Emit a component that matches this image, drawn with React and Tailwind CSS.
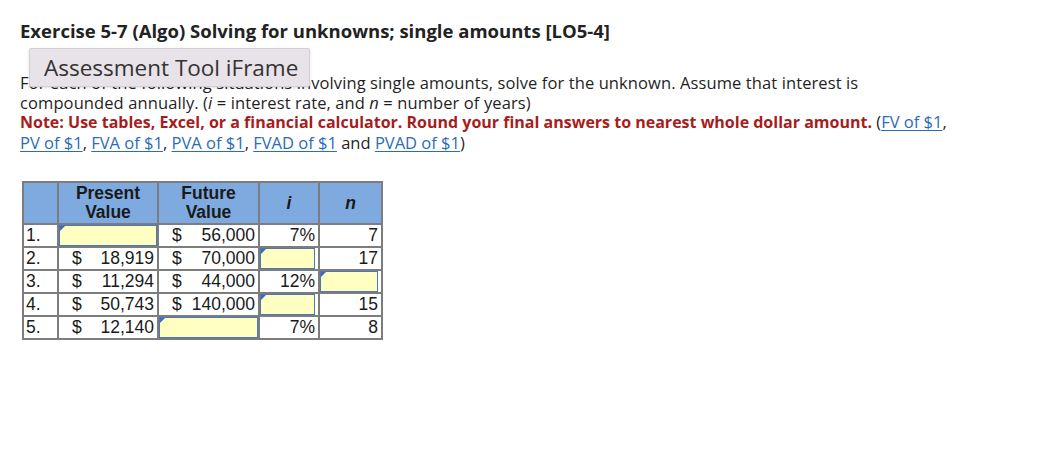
import React from 'react';

// --- Data ---

const rows = [
    { num: '1.', pv: null, fv: '56,000', i: '7%', n: '7' },
    { num: '2.', pv: '18,919', fv: '70,000', i: null, n: '17' },
    { num: '3.', pv: '11,294', fv: '44,000', i: '12%', n: null },
    { num: '4.', pv: '50,743', fv: '140,000', i: null, n: '15' },
    { num: '5.', pv: '12,140', fv: null, i: '7%', n: '8' },
];

// --- Small pieces ---

const Link = ({ children }) => (
    <span className="text-[#2b6cb8] underline underline-offset-2">{children}</span>
);

// yellow answer box with the little blue corner flag
const InputCell = () => (
    <div className="relative h-[21px] bg-[#ffffc2] border border-[#4a78b8]">
        <div className="absolute left-0 top-0 w-0 h-0 border-t-[5px] border-t-[#3a6cc0] border-r-[5px] border-r-transparent" />
    </div>
);

const Money = ({ value }) => (
    <div className="flex justify-between pl-[13px] pr-[3px]">
        <span>$</span>
        <span>{value}</span>
    </div>
);

// --- Main ---

const App = () => {
    const cell = 'border-2 border-[#7d7d7d] p-0 h-[23px] leading-[19px]';
    const head = 'border-2 border-[#7d7d7d] bg-[#7eaadf] font-bold text-center leading-[19px]';

    return (
        <div className="w-[1062px] h-[462px] bg-white text-[#1f1f1f] font-['Open_Sans','Lato',sans-serif] px-5 pt-[19px]">
            <h1 className="text-[18.5px] font-bold leading-6 text-[#222]">
                Exercise 5-7 (Algo) Solving for unknowns; single amounts [LO5-4]
            </h1>

            <div className="relative mt-[30px] text-[16.5px] leading-[19.6px]">
                <p className="tracking-[0.1px]">
                    For each of the following situations involving single amounts, solve for the unknown. Assume that interest is
                    <br />
                    compounded annually. (<i>i</i> = interest rate, and <i>n</i> = number of years)
                </p>
                <p>
                    <span className="text-[#a71d1d] font-bold text-[16px]">
                        Note: Use tables, Excel, or a financial calculator. Round your final answers to nearest whole dollar amount.
                    </span>{' '}
                    (<Link>FV of $1</Link>,
                    <br />
                    <Link>PV of $1</Link>, <Link>FVA of $1</Link>, <Link>PVA of $1</Link>, <Link>FVAD of $1</Link> and{' '}
                    <Link>PVAD of $1</Link>)
                </p>

                {/* hover tooltip covering part of the first line */}
                <div className="absolute left-[9px] top-[-25px] w-[281px] h-[39px] bg-[#e7e3e8] border border-[#d3cfd4] rounded-[2px] shadow-sm flex items-center pl-[14px] text-[22.5px] text-[#333]">
                    Assessment Tool iFrame
                </div>
            </div>

            <table className="mt-[29px] ml-[2px] border-collapse table-fixed font-['Liberation_Sans',Arial,sans-serif] text-[17.5px] text-[#1a1a1a]">
                <colgroup>
                    <col className="w-[35px]" />
                    <col className="w-[100px]" />
                    <col className="w-[101px]" />
                    <col className="w-[60px]" />
                    <col className="w-[63px]" />
                </colgroup>
                <thead>
                    <tr className="h-[42px]">
                        <th className={head}></th>
                        <th className={head}>Present<br />Value</th>
                        <th className={head}>Future<br />Value</th>
                        <th className={head}><i>i</i></th>
                        <th className={head}><i>n</i></th>
                    </tr>
                </thead>
                <tbody>
                    {rows.map((r) => (
                        <tr key={r.num}>
                            <td className={`${cell} pl-[2px]`}>{r.num}</td>
                            <td className={cell}>{r.pv ? <Money value={r.pv} /> : <InputCell />}</td>
                            <td className={cell}>{r.fv ? <Money value={r.fv} /> : <InputCell />}</td>
                            <td className={`${cell} text-right pr-[3px]`}>{r.i ? r.i : <InputCell />}</td>
                            <td className={`${cell} text-right pr-[3px]`}>{r.n ? r.n : <InputCell />}</td>
                        </tr>
                    ))}
                </tbody>
            </table>
        </div>
    );
};

export default App;
